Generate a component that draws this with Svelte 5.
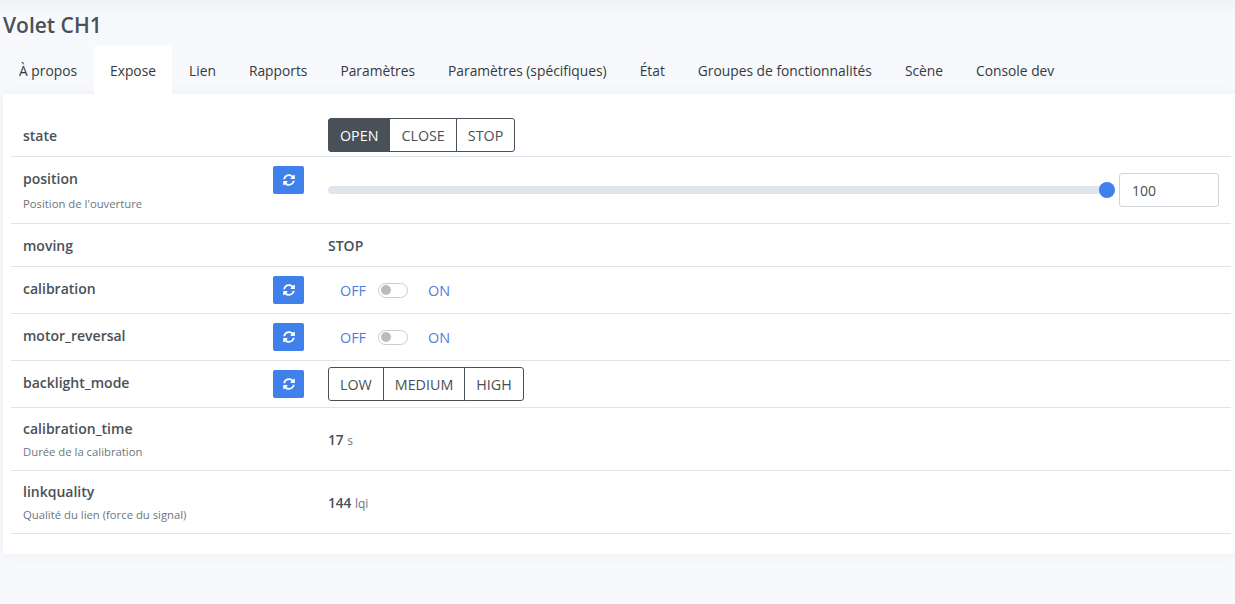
<script>
  const tabs = ['À propos', 'Expose', 'Lien', 'Rapports', 'Paramètres', 'Paramètres (spécifiques)', 'État', 'Groupes de fonctionnalités', 'Scène', 'Console dev'];
  const active = 'Expose';
</script>

{#snippet refresh()}
  <button class="refresh" aria-label="Rafraîchir">
    <svg viewBox="0 0 512 512" width="12" height="12"><path fill="currentColor" d="M370.72 133.28C339.458 104.008 298.888 87.962 255.848 88c-77.458.068-144.328 53.178-162.791 126.85-1.344 5.363-6.122 9.15-11.651 9.15H24.103c-7.498 0-13.194-6.807-11.807-14.176C33.933 94.924 134.813 8 256 8c66.448 0 126.791 26.136 171.315 68.685L463.03 40.97C478.149 25.851 504 36.559 504 57.941V192c0 13.255-10.745 24-24 24H345.941c-21.382 0-32.09-25.851-16.971-40.971l41.75-41.749zM32 296h134.059c21.382 0 32.09 25.851 16.971 40.971l-41.75 41.75c31.262 29.273 71.835 45.319 114.876 45.28 77.418-.07 144.315-53.144 162.787-126.849 1.344-5.363 6.122-9.15 11.651-9.15h57.304c7.498 0 13.193 6.807 11.807 14.176C478.067 417.076 377.187 504 256 504c-66.448 0-126.791-26.136-171.315-68.685L48.97 471.03C33.851 486.149 8 475.441 8 454.059V320c0-13.255 10.745-24 24-24z"/></svg>
  </button>
{/snippet}

{#snippet group(items, on)}
  <div class="btn-group">
    {#each items as item}
      <button class:on={item === on}>{item}</button>
    {/each}
  </div>
{/snippet}

{#snippet toggle()}
  <div class="toggle">
    <span>OFF</span>
    <span class="switch"><i></i></span>
    <span>ON</span>
  </div>
{/snippet}

<div class="page">
  <h1>Volet CH1</h1>
  <nav class="tabs">
    {#each tabs as tab}
      <a href="#top" class:active={tab === active}>{tab}</a>
    {/each}
  </nav>
  <div class="card">
    <div class="row r-state">
      <div class="label"><strong>state</strong></div>
      <div class="value">{@render group(['OPEN', 'CLOSE', 'STOP'], 'OPEN')}</div>
    </div>
    <div class="row r-position top">
      <div class="label">
        <strong>position</strong>
        <small>Position de l'ouverture</small>
        {@render refresh()}
      </div>
      <div class="value slider">
        <input type="range" min="0" max="100" value="100" />
        <input type="number" value="100" />
      </div>
    </div>
    <div class="row r-moving">
      <div class="label"><strong>moving</strong></div>
      <div class="value"><b>STOP</b></div>
    </div>
    <div class="row r-btn top">
      <div class="label"><strong>calibration</strong>{@render refresh()}</div>
      <div class="value">{@render toggle()}</div>
    </div>
    <div class="row r-btn top">
      <div class="label"><strong>motor_reversal</strong>{@render refresh()}</div>
      <div class="value">{@render toggle()}</div>
    </div>
    <div class="row r-btn top">
      <div class="label"><strong>backlight_mode</strong>{@render refresh()}</div>
      <div class="value">{@render group(['LOW', 'MEDIUM', 'HIGH'], null)}</div>
    </div>
    <div class="row r-info">
      <div class="label">
        <strong>calibration_time</strong>
        <small>Durée de la calibration</small>
      </div>
      <div class="value"><b class="num">17</b> <small class="unit">s</small></div>
    </div>
    <div class="row r-info">
      <div class="label">
        <strong>linkquality</strong>
        <small>Qualité du lien (force du signal)</small>
      </div>
      <div class="value"><b class="num">144</b> <small class="unit">lqi</small></div>
    </div>
  </div>
</div>

<style>
  :global(body) {
    margin: 0;
    background: #f7f9fc;
    font-family: "Open Sans", "Noto Sans", sans-serif;
    font-size: 14px;
    color: #495057;
  }
  .page {
    height: 604px;
    box-sizing: border-box;
    padding: 0 0 0 3px;
    background: linear-gradient(#f1f2f5, #f7f9fc 18px);
    overflow: hidden;
  }
  h1 {
    margin: 0;
    height: 46px;
    padding-top: 10px;
    box-sizing: border-box;
    font-size: 21px;
    line-height: 30px;
    font-weight: 600;
  }
  .tabs {
    display: flex;
    height: 48px;
  }
  .tabs a {
    padding: 0 16.5px;
    line-height: 50px;
    color: #343a40;
    text-decoration: none;
    font-size: 13.8px;
    border-radius: 3px 3px 0 0;
  }
  .tabs a:first-child {
    padding-left: 16px;
  }
  .tabs a.active {
    background: #fff;
  }
  .card {
    background: #fff;
    height: 460px;
    box-sizing: border-box;
    padding: 16px 4px 0 8px;
    border-radius: 0 0 4px 4px;
    box-shadow: 0 0 14px rgba(33, 37, 41, 0.05);
  }
  .row {
    display: flex;
    align-items: center;
    border-bottom: 1px solid #dee6ed;
    box-sizing: border-box;
  }
  .row.top {
    align-items: flex-start;
  }
  .r-state { height: 47px; padding-top: 4px; }
  .r-position { height: 67px; }
  .r-moving { height: 43px; }
  .r-btn { height: 47px; }
  .r-info { height: 63px; }
  .label {
    position: relative;
    width: 317px;
    box-sizing: border-box;
    padding-left: 12px;
    flex: none;
  }
  .top .label {
    padding-top: 12px;
  }
  strong {
    display: block;
    font-weight: 600;
    font-size: 14px;
    line-height: 20px;
  }
  .r-state strong {
    padding-top: 1px;
  }
  .r-moving strong {
    padding-top: 1px;
  }
  .label small {
    display: block;
    margin-top: 7px;
    font-size: 11.3px;
    line-height: 16px;
    color: #6c757d;
  }
  .r-info .label strong {
    padding-top: 1px;
  }
  .r-info .label small {
    margin-top: 5px;
  }
  .refresh {
    position: absolute;
    left: 262px;
    top: 9px;
    width: 31px;
    height: 28px;
    padding: 0;
    border: 0;
    border-radius: 2px;
    background: #3f80ea;
    color: #fff;
    display: flex;
    align-items: center;
    justify-content: center;
  }
  .value {
    flex: 1;
    font-size: 14px;
  }
  .top .value {
    padding-top: 6px;
  }
  b {
    font-weight: 600;
    font-size: 14px;
  }
  b.num {
    font-size: 13.6px;
  }
  .unit {
    font-size: 12px;
    color: #6c757d;
  }
  .btn-group {
    display: inline-flex;
  }
  .btn-group button {
    height: 34px;
    padding: 0 11px;
    border: 1px solid #495057;
    margin-left: -1px;
    background: #fff;
    color: #495057;
    font: inherit;
    font-size: 14.3px;
  }
  .btn-group button:first-child {
    margin-left: 0;
    border-radius: 3px 0 0 3px;
  }
  .btn-group button:last-child {
    border-radius: 0 3px 3px 0;
  }
  .btn-group button.on {
    background: #495057;
    color: #fff;
  }
  .slider {
    display: flex;
    align-items: center;
    gap: 4px;
    padding-right: 12px;
    padding-top: 16px !important;
  }
  input[type="range"] {
    flex: 1;
    min-width: 0;
    height: 16px;
    margin: 0;
    appearance: none;
    background: transparent;
  }
  input[type="range"]::-webkit-slider-runnable-track {
    height: 8px;
    border-radius: 4px;
    background: #dee6ed;
  }
  input[type="range"]::-webkit-slider-thumb {
    appearance: none;
    width: 16px;
    height: 16px;
    margin-top: -4px;
    border-radius: 50%;
    background: #3f80ea;
  }
  input[type="number"] {
    width: 100px;
    height: 34px;
    box-sizing: border-box;
    padding: 0 12px;
    border: 1px solid #ced4da;
    border-radius: 3px;
    font: inherit;
    font-size: 14px;
    color: #495057;
    appearance: textfield;
  }
  .toggle {
    display: flex;
    align-items: center;
    height: 34px;
    padding-left: 12px;
    color: #4f7de0;
    font-size: 14.4px;
  }
  .switch {
    width: 30px;
    height: 15px;
    box-sizing: border-box;
    margin: 0 20px 0 12px;
    border: 1px solid #ccc;
    border-radius: 8px;
    display: flex;
    align-items: center;
    padding-left: 2px;
  }
  .switch i {
    width: 10px;
    height: 10px;
    border-radius: 50%;
    background: #bbb;
  }
</style>
